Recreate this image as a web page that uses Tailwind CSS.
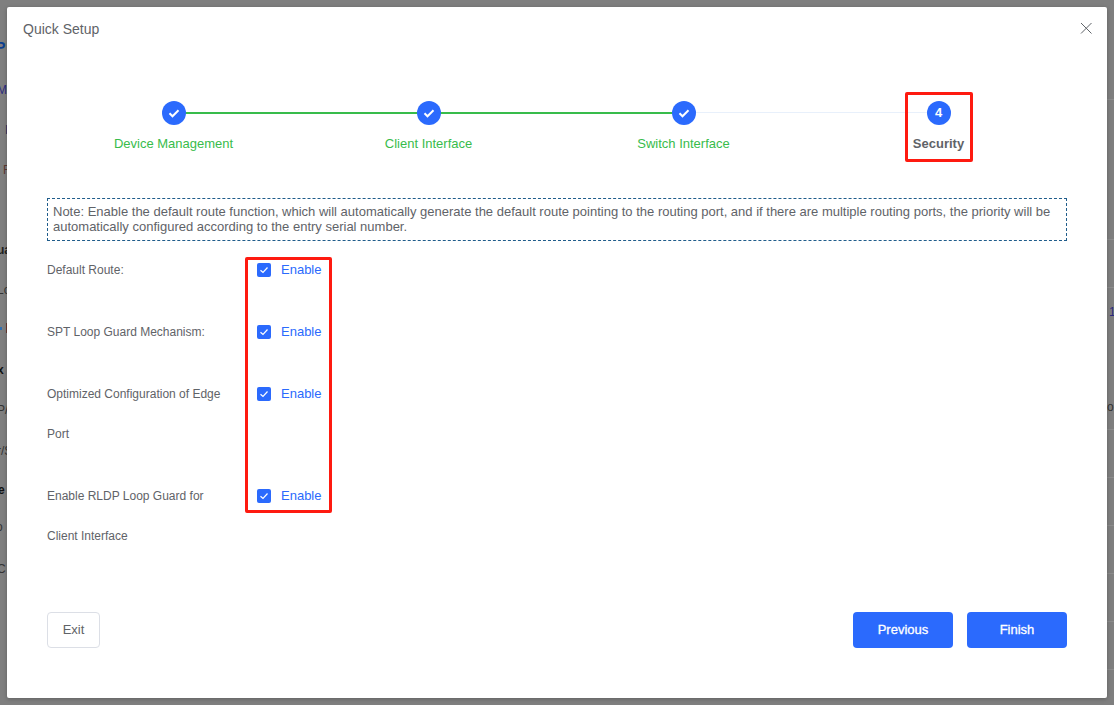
<!DOCTYPE html>
<html lang="en">
<head>
    <meta charset="UTF-8">
    <title>Quick Setup</title>
    <script src="https://cdn.jsdelivr.net/npm/@tailwindcss/browser@4"></script>
</head>
<body class="relative w-[1114px] h-[705px] overflow-hidden bg-[#7f7f7f] font-['Liberation_Sans',Arial,sans-serif] text-[12px] text-[#5f6368]">

    <!-- page behind the overlay -->
    <div class="absolute left-[-4px] top-[37px] text-[14px] font-bold text-[#0c3f90]">P</div>
    <div class="absolute left-[-3px] top-[81px] text-[12px] text-[#2a2a80]">Ma</div>
    <div class="absolute left-[5px] top-[121px] text-[12px] text-[#1f2f5c]">I</div>
    <div class="absolute left-[3px] top-[161px] text-[12px] text-[#5c3a33]">F</div>
    <div class="absolute left-[-3px] top-[241px] text-[12px] font-bold text-[#222]">ua</div>
    <div class="absolute left-[-3px] top-[281px] text-[12px] text-[#333]">Lo</div>
    <div class="absolute left-0 top-[327px] w-[2px] h-[3px] bg-[#2d6db0]"></div>
    <div class="absolute left-[6px] top-[323px] w-px h-[10px] bg-[#6a3a30]"></div>
    <div class="absolute left-[-3px] top-[361px] text-[12px] font-bold text-[#111]">x</div>
    <div class="absolute left-[-3px] top-[401px] text-[12px] text-[#333]">P/</div>
    <div class="absolute left-[-3px] top-[442px] text-[12px] text-[#333]">r/S</div>
    <div class="absolute left-[-2px] top-[481px] text-[12px] font-bold text-[#111]">e</div>
    <div class="absolute left-[-4px] top-[518px] text-[12px] text-[#333]">o</div>
    <div class="absolute left-[-3px] top-[560px] text-[12px] text-[#333]">C</div>
    <div class="absolute left-[1109px] top-[303px] text-[12px] text-[#2a2a80]">1</div>
    <div class="absolute left-[1107px] top-[398px] text-[12px] text-[#333]">o</div>
    <div class="absolute left-[1107px] right-0 top-[99px] h-px bg-[#8c8c8c]"></div>
    <div class="absolute left-[1107px] right-0 top-[239px] h-px bg-[#8c8c8c]"></div>
    <div class="absolute left-[1107px] right-0 top-[287px] h-px bg-[#8c8c8c]"></div>
    <div class="absolute left-[1107px] right-0 top-[429px] h-px bg-[#8c8c8c]"></div>
    <div class="absolute left-[1107px] right-0 top-[477px] h-px bg-[#8c8c8c]"></div>
    <div class="absolute left-[1107px] right-0 top-[525px] h-px bg-[#8c8c8c]"></div>
    <div class="absolute left-[1107px] right-0 top-[573px] h-px bg-[#8c8c8c]"></div>
    <div class="absolute left-[1107px] right-0 top-[621px] h-px bg-[#8c8c8c]"></div>
    <div class="absolute left-[1107px] right-0 top-[669px] h-px bg-[#8c8c8c]"></div>

    <!-- modal -->
    <div class="absolute left-[7px] top-[7px] w-[1100px] h-[691px] bg-white rounded-[2px] shadow-[0_1px_4px_rgba(0,0,0,0.25)] flex flex-col">
        <div class="h-[44px] flex items-center justify-between pl-[16px] pr-[14px]">
            <span class="text-[14px]">Quick Setup</span>
            <svg class="w-[14px] h-[14px] -mt-[2px]" viewBox="0 0 14 14" fill="none" stroke="#5f6368" stroke-width="1">
                <path d="M2 2l10.5 10.5M12.5 2L2 12.5"/>
            </svg>
        </div>

        <!-- steps -->
        <div class="relative mt-[50px] ml-[39px] w-[1020px] h-[60px] grid grid-cols-4">
            <div class="absolute left-[127px] top-[11px] w-[255px] h-[2px] bg-[#38bc4b]"></div>
            <div class="absolute left-[382px] top-[11px] w-[255px] h-[2px] bg-[#38bc4b]"></div>
            <div class="absolute left-[637px] top-[11px] w-[255px] h-px bg-[#e8f0fb]"></div>

            <div class="relative flex flex-col items-center">
                <div class="w-[24px] h-[24px] rounded-full bg-[#2b6afd] flex items-center justify-center">
                    <svg class="w-[14px] h-[14px]" viewBox="0 0 14 14" fill="none" stroke="white" stroke-width="2"><path d="M2.5 7.3l3 3 6-6"/></svg>
                </div>
                <div class="mt-[11px] text-[13px] leading-[16px] text-[#38bc4b]">Device Management</div>
            </div>
            <div class="relative flex flex-col items-center">
                <div class="w-[24px] h-[24px] rounded-full bg-[#2b6afd] flex items-center justify-center">
                    <svg class="w-[14px] h-[14px]" viewBox="0 0 14 14" fill="none" stroke="white" stroke-width="2"><path d="M2.5 7.3l3 3 6-6"/></svg>
                </div>
                <div class="mt-[11px] text-[13px] leading-[16px] text-[#38bc4b]">Client Interface</div>
            </div>
            <div class="relative flex flex-col items-center">
                <div class="w-[24px] h-[24px] rounded-full bg-[#2b6afd] flex items-center justify-center">
                    <svg class="w-[14px] h-[14px]" viewBox="0 0 14 14" fill="none" stroke="white" stroke-width="2"><path d="M2.5 7.3l3 3 6-6"/></svg>
                </div>
                <div class="mt-[11px] text-[13px] leading-[16px] text-[#38bc4b]">Switch Interface</div>
            </div>
            <div class="relative flex flex-col items-center">
                <div class="w-[24px] h-[24px] rounded-full bg-[#2b6afd] text-white text-[13px] font-bold flex items-center justify-center">4</div>
                <div class="mt-[11px] text-[13px] leading-[16px] font-bold">Security</div>
            </div>
            <!-- annotation -->
            <div class="absolute left-[859px] top-[-9px] w-[68px] h-[70px] border-[3px] border-[#fe1a10] rounded-[2px]"></div>
        </div>

        <!-- note -->
        <div class="mt-[37px] ml-[40px] w-[1020px] h-[43px] border border-dashed border-[#1f5c8b] px-[5px] py-[5px] text-[13px] leading-[15px]">
            Note: Enable the default route function, which will automatically generate the default route pointing to the routing port, and if there are multiple routing ports, the priority will be automatically configured according to the entry serial number.
        </div>

        <!-- form -->
        <div class="relative mt-[9px] ml-[40px] w-[1020px] leading-[40px]">
            <div class="flex h-[62px]">
                <div class="w-[180px]">Default Route:</div>
                <label class="ml-[30px] h-[40px] flex items-center text-[13px] text-[#2b6afd]">
                    <span class="w-[14px] h-[14px] rounded-[2px] bg-[#2b6afd] flex items-center justify-center"><svg class="w-[10px] h-[10px]" viewBox="0 0 10 10" fill="none" stroke="white" stroke-width="1.2"><path d="M1.5 5.2l2.5 2.3 4.5-5"/></svg></span>
                    <span class="ml-[10px]">Enable</span>
                </label>
            </div>
            <div class="flex h-[62px]">
                <div class="w-[180px]">SPT Loop Guard Mechanism:</div>
                <label class="ml-[30px] h-[40px] flex items-center text-[13px] text-[#2b6afd]">
                    <span class="w-[14px] h-[14px] rounded-[2px] bg-[#2b6afd] flex items-center justify-center"><svg class="w-[10px] h-[10px]" viewBox="0 0 10 10" fill="none" stroke="white" stroke-width="1.2"><path d="M1.5 5.2l2.5 2.3 4.5-5"/></svg></span>
                    <span class="ml-[10px]">Enable</span>
                </label>
            </div>
            <div class="flex h-[102px]">
                <div class="w-[180px]">Optimized Configuration of Edge Port</div>
                <label class="ml-[30px] h-[40px] flex items-center text-[13px] text-[#2b6afd]">
                    <span class="w-[14px] h-[14px] rounded-[2px] bg-[#2b6afd] flex items-center justify-center"><svg class="w-[10px] h-[10px]" viewBox="0 0 10 10" fill="none" stroke="white" stroke-width="1.2"><path d="M1.5 5.2l2.5 2.3 4.5-5"/></svg></span>
                    <span class="ml-[10px]">Enable</span>
                </label>
            </div>
            <div class="flex h-[80px]">
                <div class="w-[180px]">Enable RLDP Loop Guard for Client Interface</div>
                <label class="ml-[30px] h-[40px] flex items-center text-[13px] text-[#2b6afd]">
                    <span class="w-[14px] h-[14px] rounded-[2px] bg-[#2b6afd] flex items-center justify-center"><svg class="w-[10px] h-[10px]" viewBox="0 0 10 10" fill="none" stroke="white" stroke-width="1.2"><path d="M1.5 5.2l2.5 2.3 4.5-5"/></svg></span>
                    <span class="ml-[10px]">Enable</span>
                </label>
            </div>
            <!-- annotation -->
            <div class="absolute left-[198px] top-[7px] w-[87px] h-[256px] border-[3px] border-[#fe1a10] rounded-[2px]"></div>
        </div>

        <!-- footer -->
        <div class="mt-[56px] ml-[40px] w-[1020px] flex items-center justify-between text-[13px]">
            <button class="w-[53px] h-[36px] border border-[#dcdfe6] rounded-[4px]">Exit</button>
            <div class="flex gap-[14px]">
                <button class="w-[100px] h-[36px] rounded-[4px] bg-[#2b6afd] text-white [-webkit-text-stroke:0.3px_white]">Previous</button>
                <button class="w-[100px] h-[36px] rounded-[4px] bg-[#2b6afd] text-white [-webkit-text-stroke:0.3px_white]">Finish</button>
            </div>
        </div>
    </div>
</body>
</html>
